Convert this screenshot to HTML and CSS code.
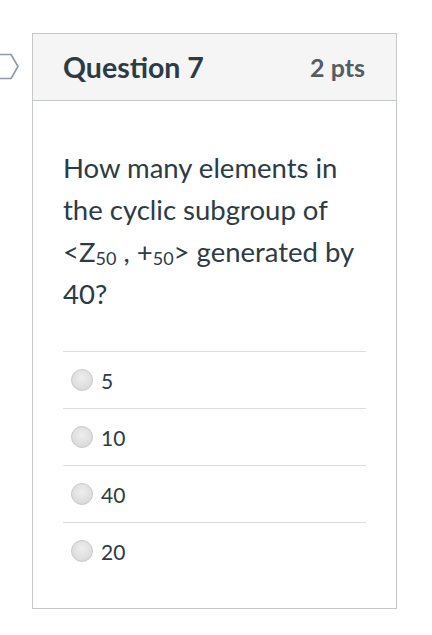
FILE: index.html
```html
<!DOCTYPE html>
<html>
<head>
<meta charset="utf-8">
<link rel="stylesheet" href="styles.css">
</head>
<body>
<div class="page">
  <svg class="flag" width="20" height="28" viewBox="0 0 20 28">
    <path d="M-2 1.5 H11 L18 13.5 L11 25.5 H-2" fill="none" stroke="#8e9ba6" stroke-width="1.6" stroke-linejoin="round"/>
  </svg>
  <div class="card">
    <div class="header">
      <span class="title">Question 7</span>
      <span class="pts">2 pts</span>
    </div>
    <div class="body">
      <p class="question">How many elements in the cyclic subgroup of &lt;Z<span class="sub">50</span> , +<span class="sub">50</span>&gt; generated by 40?</p>
      <ul class="answers">
        <li class="answer"><span class="radio"></span><span class="label">5</span></li>
        <li class="answer"><span class="radio"></span><span class="label">10</span></li>
        <li class="answer"><span class="radio"></span><span class="label">40</span></li>
        <li class="answer"><span class="radio"></span><span class="label">20</span></li>
      </ul>
    </div>
  </div>
</div>
</body>
</html>
```
FILE: styles.css
```css
html, body {
  margin: 0;
  padding: 0;
  background: #ffffff;
}
body {
  font-family: Lato, "Open Sans", sans-serif;
  color: #2d3b45;
}
.page {
  position: relative;
  padding: 33px 0 0 32px;
}
.flag {
  position: absolute;
  left: 0;
  top: 53px;
}
.card {
  width: 363px;
  height: 574px;
  border: 1px solid #c4c8cb;
  box-sizing: content-box;
  display: flex;
  flex-direction: column;
}
.header {
  height: 66px;
  background: #f5f5f5;
  border-bottom: 1px solid #c4c8cb;
  display: flex;
  align-items: center;
  justify-content: space-between;
  padding: 0 31px 0 30px;
}
.title {
  font-size: 28.5px;
  font-weight: 700;
  color: #2d3b45;
}
.pts {
  font-size: 25px;
  font-weight: 700;
  color: #545d63;
}
.body {
  padding: 46px 30px 0 30px;
}
.question {
  margin: 0;
  font-size: 27.5px;
  line-height: 42px;
  color: #2d3b45;
}
.sub {
  font-size: 18px;
  line-height: 1;
  position: relative;
  top: 3px;
}
.answers {
  list-style: none;
  margin: 36px 0 0 0;
  padding: 0;
}
.answer {
  height: 56px;
  border-top: 1px solid #dcdfe1;
  display: flex;
  align-items: center;
  padding-left: 8px;
}
.radio {
  width: 22px;
  height: 22px;
  border-radius: 50%;
  box-sizing: border-box;
  border: 1px solid #c9c9c9;
  background: radial-gradient(circle at 50% 40%, #eeeeee 0%, #dcdcdc 70%, #cfcfcf 100%);
  margin-right: 8px;
}
.label {
  font-size: 21px;
  color: #2d3b45;
}
```
